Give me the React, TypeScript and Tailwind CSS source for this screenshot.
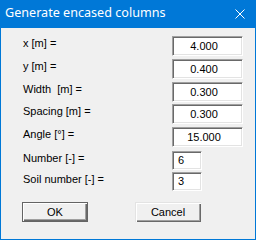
import React from "react";

const font = { fontFamily: '"Liberation Sans", Arial, sans-serif' };

function Field({ value, small }: { value: string; small?: boolean }) {
  return (
    <div
      className={
        "bg-white border border-t-[#a0a0a0] border-l-[#a0a0a0] border-b-white border-r-white shadow-[inset_1px_1px_0_#696969,inset_-1px_-1px_0_#e3e3e3] text-[11px] text-black flex items-center " +
        (small ? "w-[30px] h-[19px] pl-[5px]" : "w-[71px] h-[20px] justify-center pr-[7px]")
      }
    >
      {value}
    </div>
  );
}

function Row({ label, value, small, mt }: { label: string; value: string; small?: boolean; mt: string }) {
  return (
    <div className={"flex items-start " + mt}>
      <div className="w-[150px] pl-[1px] pt-[1px] text-[11px] leading-[12px] text-black whitespace-pre">{label}</div>
      <Field value={value} small={small} />
    </div>
  );
}

export default function App() {
  return (
    <div className="w-[256px] h-[240px] bg-[#0078d7] flex flex-col px-[1px] pb-[1px]" style={font}>
      <div className="h-[28px] flex items-center justify-between pl-[4px] pr-[10px]">
        <span
          className="text-white text-[12.6px] leading-none pb-[1px]"
          style={{ fontFamily: '"Noto Sans", "Open Sans", sans-serif' }}
        >
          Generate encased columns
        </span>
        <svg width="10" height="10" viewBox="0 0 10 10" className="mb-[1px]">
          <path d="M0.5 0.5 L9.5 9.5 M9.5 0.5 L0.5 9.5" stroke="white" strokeWidth="1" fill="none" />
        </svg>
      </div>
      <div className="flex-1 bg-[#f0f0f0] pl-[21px] pt-[8px] flex flex-col">
        <Row label="x [m] =" value="4.000" mt="mt-0" />
        <Row label="y [m] =" value="0.400" mt="mt-[3px]" />
        <Row label="Width  [m] =" value="0.300" mt="mt-[3px]" />
        <Row label="Spacing [m] =" value="0.300" mt="mt-[2px]" />
        <Row label="Angle [°] =" value="15.000" mt="mt-[3px]" />
        <Row label="Number [-] =" value="6" small mt="mt-[4px]" />
        <Row label="Soil number [-] =" value="3" small mt="mt-[2px]" />
        <div className="flex mt-[11px] gap-[47px]">
          <button className="w-[66px] h-[20px] bg-[#f0f0f0] border border-[#646464] shadow-[inset_1px_1px_0_#fff,inset_-1px_-1px_0_#696969,inset_-2px_-2px_0_#a0a0a0] text-[11px] text-black flex items-center justify-center">
            OK
          </button>
          <button className="w-[66px] h-[20px] bg-[#f0f0f0] shadow-[inset_1px_1px_0_#e3e3e3,inset_2px_2px_0_#fff,inset_-1px_-1px_0_#696969,inset_-2px_-2px_0_#a0a0a0] text-[11px] text-black flex items-center justify-center">
            Cancel
          </button>
        </div>
      </div>
    </div>
  );
}
